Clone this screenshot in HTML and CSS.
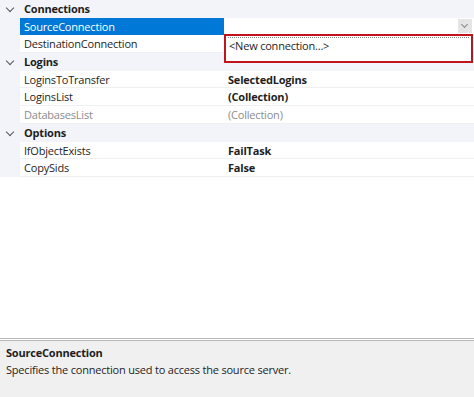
FILE: index.html
```html
<!DOCTYPE html>
<html lang="en">

<head>
    <meta charset="UTF-8">
    <title>Properties</title>
    <link rel="stylesheet" href="styles.css">
</head>

<body>
    <div class="props">
        <!-- Property grid -->
        <div class="grid">
            <div class="row category">
                <div class="gutter"><span class="chevron"></span></div>
                <div class="cat-name">Connections</div>
            </div>
            <div class="row">
                <div class="gutter"></div>
                <div class="name selected">SourceConnection</div>
                <div class="value editing">
                    <span class="drop-btn"><span class="chevron small"></span></span>
                </div>
            </div>
            <div class="row">
                <div class="gutter"></div>
                <div class="name">DestinationConnection</div>
                <div class="value"></div>
            </div>
            <div class="row category">
                <div class="gutter"><span class="chevron"></span></div>
                <div class="cat-name">Logins</div>
            </div>
            <div class="row">
                <div class="gutter"></div>
                <div class="name">LoginsToTransfer</div>
                <div class="value bold">SelectedLogins</div>
            </div>
            <div class="row">
                <div class="gutter"></div>
                <div class="name">LoginsList</div>
                <div class="value bold">(Collection)</div>
            </div>
            <div class="row">
                <div class="gutter"></div>
                <div class="name disabled">DatabasesList</div>
                <div class="value disabled">(Collection)</div>
            </div>
            <div class="row category">
                <div class="gutter"><span class="chevron"></span></div>
                <div class="cat-name">Options</div>
            </div>
            <div class="row">
                <div class="gutter"></div>
                <div class="name">IfObjectExists</div>
                <div class="value bold">FailTask</div>
            </div>
            <div class="row">
                <div class="gutter"></div>
                <div class="name">CopySids</div>
                <div class="value bold">False</div>
            </div>

            <!-- Open dropdown list (highlighted) -->
            <div class="dropdown">
                <div class="dropdown-item">&lt;New connection...&gt;</div>
            </div>
        </div>

        <!-- Description pane -->
        <div class="desc">
            <div class="desc-title">SourceConnection</div>
            <div class="desc-text">Specifies the connection used to access the source server.</div>
        </div>
    </div>
</body>

</html>
```

FILE: styles.css
```css
html,
body {
    margin: 0;
    height: 100%;
}

body {
    font-family: "Open Sans", "Noto Sans", sans-serif;
    font-size: 11px;
    letter-spacing: -0.2px;
    color: #1e1e1e;
    background-color: #ffffff;
}

.props {
    display: flex;
    flex-direction: column;
    height: 100%;
}

/* Property grid */
.grid {
    position: relative;
    flex: 1;
}

.row {
    display: flex;
    height: 17.7px;
    line-height: 18px;
}

.gutter {
    width: 20px;
    flex: none;
    background-color: #f2f4f9;
    position: relative;
}

.name,
.value {
    border-bottom: 1px solid #f0f0f0;
    box-sizing: border-box;
    white-space: nowrap;
    overflow: hidden;
}

.name {
    width: 204px;
    flex: none;
    padding-left: 4px;
}

.value {
    flex: 1;
    padding-left: 4px;
    position: relative;
}

.name.selected {
    background-color: #0078d7;
    color: #ffffff;
    border-bottom-color: #0078d7;
}

.value.editing {
    border-bottom-color: #ffffff;
}

.bold {
    font-weight: bold;
}

.disabled {
    color: #8c8c8c;
}

/* Category rows */
.category {
    background-color: #f2f4f9;
}

.cat-name {
    flex: 1;
    font-weight: bold;
    padding-left: 4px;
}

.chevron {
    position: absolute;
    left: 7px;
    top: 5px;
    width: 5px;
    height: 5px;
    border-right: 1.2px solid #555;
    border-bottom: 1.2px solid #555;
    transform: rotate(45deg);
}

.chevron.small {
    left: 4px;
    top: 3px;
    width: 4px;
    height: 4px;
    border-color: #888;
}

.drop-btn {
    position: absolute;
    right: 2px;
    top: 1px;
    width: 14px;
    height: 14px;
    background-color: #e5e5e5;
}

/* Dropdown list, marked with a red frame */
.dropdown {
    position: absolute;
    left: 224px;
    top: 34px;
    width: 249px;
    height: 29px;
    box-sizing: border-box;
    border: 2px solid #c0141c;
    background-color: #ffffff;
    padding: 1px 2px 0 2px;
}

.dropdown-item {
    border-top: 1px dotted #888;
    line-height: 16px;
    padding-left: 1px;
}

/* Description pane */
.desc {
    height: 59px;
    flex: none;
    background-color: #f0f0f0;
    border-top: 1px solid #b9b9b9;
    box-shadow: inset 0 1px 0 #ffffff, inset 0 2px 0 #b9b9b9;
    padding: 5px 6px 0 6px;
    box-sizing: border-box;
    line-height: 17px;
}

.desc-title {
    font-weight: bold;
}
```
